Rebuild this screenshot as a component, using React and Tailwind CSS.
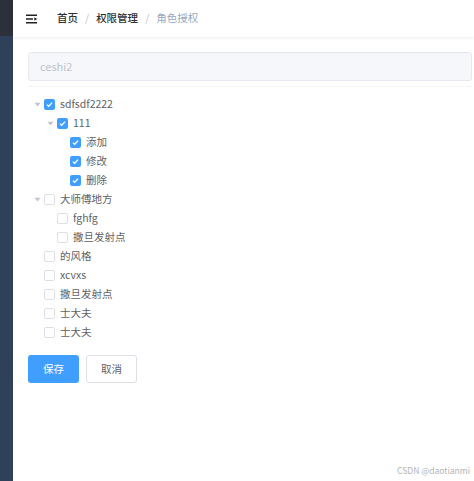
import React from "react";

const Check = ({ checked }) =>
  checked ? (
    <span className="flex h-[11px] w-[11px] items-center justify-center rounded-[2px] bg-[#409eff]">
      <svg width="9" height="9" viewBox="0 0 9 9">
        <path d="M1.9 4.6 L3.7 6.3 L7.1 2.6" fill="none" stroke="#fff" strokeWidth="1.3" />
      </svg>
    </span>
  ) : (
    <span className="h-[11px] w-[11px] rounded-[2px] border border-[#dcdfe6] bg-white" />
  );

const Arrow = ({ show }) => (
  <span className="flex w-[13px] items-center justify-center">
    {show && (
      <svg width="7" height="5" viewBox="0 0 7 5">
        <path d="M0.5 0.8 L6.5 0.8 L3.5 4.4 Z" fill="#c0c4cc" />
      </svg>
    )}
  </span>
);

const rows = [
  { level: 0, arrow: true, checked: true, label: "sdfsdf2222" },
  { level: 1, arrow: true, checked: true, label: "111" },
  { level: 2, arrow: false, checked: true, label: "添加" },
  { level: 2, arrow: false, checked: true, label: "修改" },
  { level: 2, arrow: false, checked: true, label: "删除" },
  { level: 0, arrow: true, checked: false, label: "大师傅地方" },
  { level: 1, arrow: false, checked: false, label: "fghfg" },
  { level: 1, arrow: false, checked: false, label: "撒旦发射点" },
  { level: 0, arrow: false, checked: false, label: "的风格" },
  { level: 0, arrow: false, checked: false, label: "xcvxs" },
  { level: 0, arrow: false, checked: false, label: "撒旦发射点" },
  { level: 0, arrow: false, checked: false, label: "士大夫" },
  { level: 0, arrow: false, checked: false, label: "士大夫" },
];

const indent = ["pl-[3px]", "pl-[16px]", "pl-[29px]"];

export default function App() {
  return (
    <div
      className="relative flex h-[481px] w-[474px] overflow-hidden bg-white"
      style={{ fontFamily: '"Noto Sans CJK SC", "Noto Sans", sans-serif' }}
    >
      <div className="flex w-[13px] flex-col">
        <div className="h-[36px] bg-[#2b303b]" />
        <div className="flex-1 bg-[#2f4059]" />
      </div>
      <div className="flex flex-1 flex-col">
        <div className="flex h-[37px] items-center pl-[13px] shadow-[0_1px_3px_rgba(0,21,41,0.08)]">
          <svg width="12" height="10" viewBox="0 0 12 10">
            <rect x="0" y="0.5" width="11" height="1.5" fill="#222" />
            <rect x="0" y="4.25" width="7" height="1.5" fill="#222" />
            <rect x="0" y="8" width="11" height="1.5" fill="#222" />
            <path d="M8.3 3.2 L11.2 5 L8.3 6.8 Z" fill="#222" />
          </svg>
          <div className="ml-[19px] flex items-center text-[10.5px] leading-none">
            <span className="font-medium text-[#303133]">首页</span>
            <span className="mx-[7px] text-[#c0c4cc]">/</span>
            <span className="font-medium text-[#303133]">权限管理</span>
            <span className="mx-[7px] text-[#c0c4cc]">/</span>
            <span className="text-[#97a8be]">角色授权</span>
          </div>
        </div>
        <div className="flex flex-col pl-[15px] pt-[15px]">
          <div className="flex h-[29px] w-[444px] items-center rounded-[3px] border border-[#e4e7ed] bg-[#f5f7fa] px-[11px] text-[11px] text-[#c0c4cc]">
            ceshi2
          </div>
          <div className="mt-[5px] h-px w-[444px] bg-[#f4f5f7]" />
          <div className="mt-[8px] flex flex-col">
            {rows.map((r, i) => (
              <div
                key={i}
                className={`flex h-[19px] items-center ${indent[r.level]} text-[10.5px] text-[#606266]`}
              >
                <Arrow show={r.arrow} />
                <Check checked={r.checked} />
                <span className="ml-[5px] leading-none">{r.label}</span>
              </div>
            ))}
          </div>
          <div className="mt-[13px] flex gap-[7px]">
            <button className="flex h-[28px] w-[51px] items-center justify-center rounded-[3px] bg-[#409eff] text-[10.5px] text-white">
              保存
            </button>
            <button className="flex h-[28px] w-[51px] items-center justify-center rounded-[3px] border border-[#dcdfe6] bg-white text-[10.5px] text-[#606266]">
              取消
            </button>
          </div>
        </div>
      </div>
      <div className="absolute bottom-[4px] right-[4px] text-[8.5px] text-[#b4b4b4]">
        CSDN @daotianmi
      </div>
    </div>
  );
}
